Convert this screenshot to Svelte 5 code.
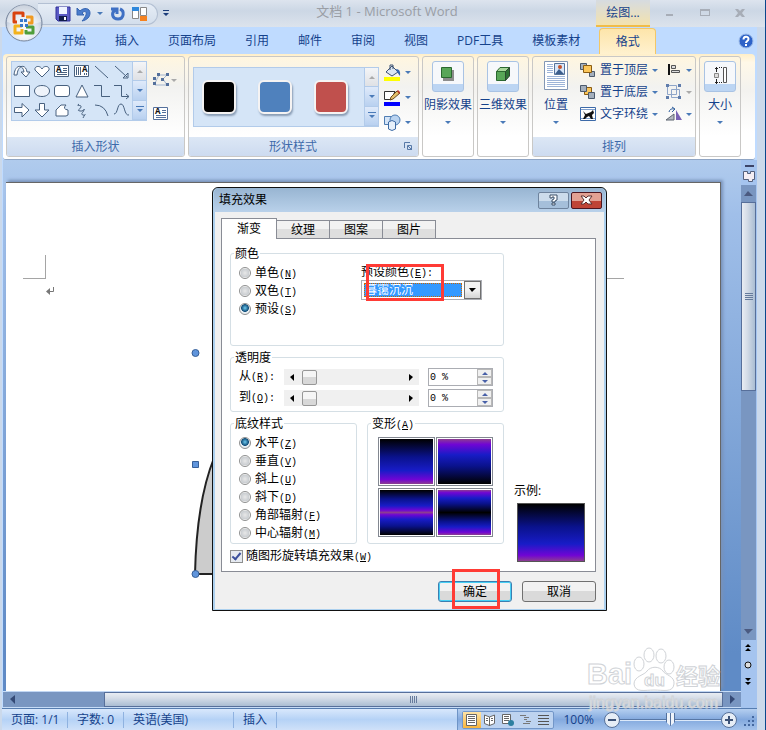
<script lang="ts">
	type Shape = { d: string; fill?: string; letter?: number };

	const shapes: Shape[] = [
		{ d: 'M2 13C3 2 11 2 12 10H9L14 15L18 10H15C14 2 6 2 5 13Z', fill: '#fff' },
		{ d: 'M10 15L3 8C2 4 8 3 10 7C12 3 18 4 17 8Z', fill: '#fff' },
		{ d: 'M2.5 3.5H16.5V14.5H2.5ZM11 6.5H15M11 8.5H15M5 10.5H15M5 12.5H15', fill: '#fff', letter: 4 },
		{ d: 'M2.5 3.5H16.5V14.5H2.5ZM4.5 5V13M6.5 5V13M8.5 5V13M12.5 11V13M14.5 11V13', fill: '#fff', letter: 10 },
		{ d: 'M3 4L16 16' },
		{ d: 'M3 4L15 15M16 11V16H11Z' },
		{ d: 'M2.5 4.5H17.5V15.5H2.5Z', fill: '#fff' },
		{ d: 'M10 4.5C20 4.5 20 15.5 10 15.5C0 15.5 0 4.5 10 4.5Z', fill: '#eef3fa' },
		{ d: 'M5 4.5H15Q17.5 4.5 17.5 7V13Q17.5 15.5 15 15.5H5Q2.5 15.5 2.5 13V7Q2.5 4.5 5 4.5Z', fill: '#fff' },
		{ d: 'M10 4L16 16H4Z', fill: '#fff' },
		{ d: 'M2 4.5H9.5V15.5H18' },
		{ d: 'M2 4.5H9.5V15.5H17M14 13L17 15.5L14 18' },
		{ d: 'M2.5 7.5H10V3.5L17 10L10 17V12.5H2.5Z', fill: '#fff' },
		{ d: 'M7.5 3.5H12.5V10H17L10 17L3 10H7.5Z', fill: '#fff' },
		{ d: 'M4 16V10L9 5H14Q10 9 16 10V15L14 16Z', fill: '#fff' },
		{ d: 'M7 4C3 7 10 4 9 7S4 10 8 11S13 7 12 10S8 14 11 15S14 12 11 18' },
		{ d: 'M3 5Q13 5 16 16' },
		{ d: 'M2 14C6 14 5 4 9 4S12 16 17 15' }
	];

	const ribbonTabs = ['开始', '插入', '页面布局', '引用', '邮件', '审阅', '视图', 'PDF工具', '模板素材'];
	const swatches = ['black', 'blue', 'red'];
	const dialogTabs = ['渐变', '纹理', '图案', '图片'];
	const modes = [
		{ name: '单色', key: 'N' },
		{ name: '双色', key: 'T' },
		{ name: '预设', key: 'S' }
	];
	const shading = [
		{ name: '水平', key: 'Z' },
		{ name: '垂直', key: 'V' },
		{ name: '斜上', key: 'U' },
		{ name: '斜下', key: 'D' },
		{ name: '角部辐射', key: 'F' },
		{ name: '中心辐射', key: 'M' }
	];

	let activeTab = $state('渐变');
	let mode = $state('预设');
	let style = $state('水平');
	let variant = $state('down');
	let zoom = $state(50);
	let rotate = $state(true);
	let sliders = $state([
		{ id: 'from', name: '从', key: 'R', value: 0, text: '0 %' },
		{ id: 'to', name: '到', key: 'O', value: 0, text: '0 %' }
	]);
</script>

{#snippet key(k: string, end = '')}<span class="key">(<u>{k}</u>){end}</span>{/snippet}

{#snippet arrow(dim = false)}
	<svg class="arrow" class:dim width="6" height="3" viewBox="0 0 6 3"><path d="M0 0H6L3 3Z" /></svg>
{/snippet}

{#snippet galleryScroll()}
	<div class="gallery-scroll">
		<button class="off" aria-label="上一行"><svg width="6" height="3"><path d="M0 3H6L3 0Z" /></svg></button>
		<button aria-label="下一行">{@render arrow()}</button>
		<button aria-label="更多"><svg width="8" height="7"><path d="M0 0H8V1H0ZM1 3H7L4 6Z" /></svg></button>
	</div>
{/snippet}

<div class="app">
	<header class="titlebar">
		<div class="quick">
			<button aria-label="保存">
				<svg width="16" height="16"><path d="M1 1H15V15H3L1 13Z" fill="#5a5ac4" stroke="#30309a" /><path d="M4 1H12V8H4Z" fill="#eef3ff" /><path d="M4 10H12V15H4Z" fill="#111c4c" /><path d="M9 11H11V14H9Z" fill="#fff" /></svg>
			</button>
			<button aria-label="撤消">
				<svg width="16" height="16"><path d="M1 2V9H8L6 7C9 4 11 6 10 9C9 11 8 13 6 15C11 14 14 11 14 7C14 2 8 1 4 5Z" fill="#4a7ccc" stroke="#3564b0" /></svg>
			</button>
			{@render arrow()}
			<button class="redo" aria-label="重复">
				<svg width="16" height="16"><path d="M10 3C15 5 14 13 8 13C2 13 1 7 5 4M1 3H7V8" fill="none" stroke="#3f70c4" stroke-width="3" /></svg>
			</button>
			<button aria-label="切换窗口">
				<svg width="18" height="16"><path d="M1.500 1.500H7.500V12.500H1.500Z" fill="#fff" stroke="#888" /><path d="M1 1H8V5H1Z" fill="#2f88dc" /><path d="M9.500 1.500H15.500V9.500H9.500Z" fill="#fff" stroke="#888" /><path d="M9 10H16V15H9Z" fill="#f58220" /></svg>
			</button>
		</div>
		<button class="customize" aria-label="自定义快速访问工具栏">
			<svg width="8" height="8"><path d="M1 0H7V1H1ZM1 3H7L4 6Z" fill="#1b3c7a" /></svg>
		</button>
		<h1>文档 1 - Microsoft Word</h1>
		<div class="context">绘图...</div>
		<div class="window-buttons">
			<button aria-label="最小化"><svg width="10" height="10"><path d="M1 6H8V8H1Z" /></svg></button>
			<button aria-label="还原"><svg width="10" height="10"><path d="M0 1H10V8H0ZM1 3V7H9V3Z" fill-rule="evenodd" /></svg></button>
			<button aria-label="关闭"><svg width="10" height="10"><path d="M0 1H3L5 3L7 1H10L7 5L10 9H7L5 7L3 9H0L3 5Z" /></svg></button>
		</div>
		<button class="office" aria-label="Office 按钮">
			<svg width="38" height="38" viewBox="0 0 38 38">
				<defs>
					<radialGradient id="orb" cx="50%" cy="75%" r="70%"><stop offset="0" stop-color="#fff" /><stop offset="0.6" stop-color="#dce3ed" /><stop offset="1" stop-color="#a6b3c7" /></radialGradient>
				</defs>
				<circle cx="19" cy="19" r="18" fill="url(#orb)" stroke="#75849c" />
				<path d="M2 18A17 17 0 0 1 36 18Q19 24 2 18Z" fill="#fff" opacity="0.45" />
				<g fill="none" stroke-width="3" stroke-linejoin="round">
					<path d="M12 18H9V9H18V13" stroke="#d9430f" />
					<path d="M21 13H27V19H23" stroke="#f09a22" />
					<path d="M17 22H10V29H17V25" stroke="#f3b21d" />
					<path d="M21 23H28V29H21V26" stroke="#4f9e3a" />
				</g>
				<path d="M15 15H18V18H15ZM19 15H22V18H19ZM15 20H18V23H15ZM20 20H23V23H20Z" fill="#3678c9" />
			</svg>
		</button>
	</header>

	<div class="frame">
		<nav class="tabs">
			{#each ribbonTabs as tab}
				<button>{tab}</button>
			{/each}
			<button class="active">格式</button>
			<button class="help" aria-label="帮助">
				<svg width="16" height="16"><circle cx="8" cy="8" r="7" fill="#2d62c8" stroke="#9dbbe8" /><path d="M5.500 6.500C5.500 3 10.500 3 10.500 6C10.500 8 8 8 8 10M8 11V13" fill="none" stroke="#fff" stroke-width="2" /></svg>
			</button>
		</nav>

		<div class="ribbon">
			<section class="group insert">
				<div class="group-body">
					<div class="gallery">
						<div class="shapes">
							{#each shapes as shape}
								<button aria-label="形状">
									<svg width="20" height="20" viewBox="0 0 20 20">
										<path d={shape.d} fill={shape.fill ?? 'none'} stroke="#48617f" />
										{#if shape.letter}
											<rect x={shape.letter - 1} y="4" width="7" height="6" fill="#fff" />
											<text x={shape.letter} y="10">A</text>
										{/if}
									</svg>
								</button>
							{/each}
						</div>
						{@render galleryScroll()}
					</div>
					<div class="insert-tools">
						<button aria-label="编辑形状">
							<svg width="17" height="16"><path d="M2 11L6 3H14L10 7L14 13H2Z" fill="none" stroke="#a3b5cf" /><path d="M0 10H3V13H0ZM4 1H7V4H4ZM13 1H16V4H13ZM8 6H11V9H8ZM13 11H16V14H13ZM0 5H3V8H0Z" fill="#54709c" /></svg>
							{@render arrow(true)}
						</button>
						<button aria-label="文本框">
							<svg width="16" height="18"><path d="M.5 3.500H14.500V15.500H.5ZM9 6.500H13M9 8.500H13M3 11.500H13M3 13.500H13" fill="#fff" stroke="#54709c" /><text x="2" y="10">A</text></svg>
						</button>
					</div>
				</div>
				<h2>插入形状</h2>
			</section>

			<section class="group styles">
				<div class="group-body">
					<div class="gallery">
						<div class="swatches">
							{#each swatches as color}
								<button class="swatch {color}" aria-label={color}></button>
							{/each}
						</div>
						{@render galleryScroll()}
					</div>
					<div class="style-tools">
						<button aria-label="形状填充">
							<svg width="18" height="17"><path d="M2 8L8 2L14 8L8 12Z" fill="#dce6f2" stroke="#3d5275" /><path d="M6 6V1H9V5" fill="none" stroke="#3d5275" /><path d="M12 5Q17 5 16 12L13 8Z" fill="#3566b0" /><path d="M0 13H16V17H0Z" fill="#ff0" /></svg>
							{@render arrow()}
						</button>
						<button aria-label="形状轮廓">
							<svg width="18" height="17"><path d="M.5 2.500H11L7 10.500H.5Z" fill="#fff" stroke="#333" /><path d="M6 11L7 8L13 2L16 4L9 10Z" fill="#e3c06a" stroke="#6c4a1c" /><path d="M13 2L14 1L16 3L15 5Z" fill="#c0392b" /><path d="M0 13H16V17H0Z" fill="#00f" /></svg>
							{@render arrow()}
						</button>
						<button aria-label="更改形状">
							<svg width="18" height="17"><path d="M.5 2.500H10V10.500H.5Z" fill="#d4e4f7" stroke="#4f7db3" /><circle cx="11" cy="6" r="5" fill="#b9d3f0" stroke="#4f7db3" /><path d="M4.500 8Q8 5 11.500 8V15Q8 18 4.500 15Z" fill="#e6f0fb" stroke="#3d6ba5" /></svg>
							{@render arrow()}
						</button>
					</div>
				</div>
				<h2>
					形状样式
					<button class="launcher" aria-label="更多选项"><svg width="9" height="9"><path d="M.5 6V.5H6M3.500 3.500H7.500V7.500H3.500ZM4 4L8 8" fill="none" stroke="#5779a8" /></svg></button>
				</h2>
			</section>

			<section class="group big">
				<button>
					<span class="tile"><svg width="16" height="16"><path d="M3 3H14V14H3Z" fill="#8c8c8c" /><path d="M1.500 .5H11.500V10.500H1.500Z" fill="#58a658" stroke="#2b6830" /></svg></span>
					阴影效果
					{@render arrow()}
				</button>
			</section>
			<section class="group big">
				<button>
					<span class="tile"><svg width="16" height="16"><path d="M1.500 4.500H10.500V13.500H1.500Z" fill="#58a658" stroke="#2b6830" /><path d="M1.500 4.500L5 .5H14.500L10.500 4.500Z" fill="#a6d699" stroke="#2b6830" /><path d="M10.500 4.500L14.500 .5V9L10.500 13.500Z" fill="#2d7034" stroke="#2b4830" /></svg></span>
					三维效果
					{@render arrow()}
				</button>
			</section>

			<section class="group arrange">
				<div class="group-body">
					<button class="position">
						<svg width="24" height="30"><path d="M.5 .5H23.500V28.500H.5Z" fill="#fff" stroke="#8296b4" /><path d="M3 3.500H9M3 5.500H9M3 7.500H9M3 9.500H9M3 11.500H9M3 15.500H21M3 17.500H21M3 19.500H21M3 21.500H21M3 23.500H21M3 25.500H21" stroke="#9db4d8" /><path d="M10.500 2.500H20.500V13.500H10.500Z" fill="#d7e6f9" stroke="#577398" /><path d="M11 13L15 8L20 13Z" fill="#3b5d8c" /><circle cx="16" cy="6" r="2" fill="#c5532c" /></svg>
						<span>位置</span>
						{@render arrow()}
					</button>
					<div class="order">
						<button>
							<svg width="16" height="16"><path d="M.5 1.500H6.500V7.500H.5ZM9.500 9.500H14.500V14.500H9.500Z" fill="#a4afbc" stroke="#4c5a6c" /><path d="M3.500 3.500H11.500V10.500H3.500Z" fill="#fbc65a" stroke="#8a5c12" /></svg>
							置于顶层 {@render arrow()}
						</button>
						<button>
							<svg width="16" height="16"><path d="M4.500 3.500H11.500V10.500H4.500Z" fill="#fbc65a" stroke="#8a5c12" /><path d="M.5 1.500H6.500V7.500H.5ZM8.500 8.500H14.500V14.500H8.500Z" fill="#a4afbc" stroke="#4c5a6c" /></svg>
							置于底层 {@render arrow()}
						</button>
						<button>
							<svg width="16" height="16"><path d="M.5 1.500H15.500V14.500H.5Z" fill="#fff" stroke="#3d6aa8" /><path d="M1 3.500H15M1 12.500H15" stroke="#7e9fce" /><path d="M3 5L6 8L11 6L13 4L14 7L12 9L13 13H11L9 10L7 11L5 13H3L5 9Z" fill="#111" /></svg>
							文字环绕 {@render arrow()}
						</button>
					</div>
					<div class="order">
						<button aria-label="对齐">
							<svg width="16" height="16"><path d="M2 2H4V13H2Z" fill="#111" /><path d="M5.500 3.500H9.500V6.500H5.500ZM5.500 8.500H13.500V10.500H5.500Z" fill="#ddd" stroke="#555" /></svg>
							{@render arrow()}
						</button>
						<button aria-label="组合">
							<svg width="16" height="16"><path d="M1.500 1.500H10.500V10.500H1.500ZM5.500 5.500H13.500V13.500H5.500Z" fill="none" stroke="#8ea5c9" /><path d="M0 0H3V3H0ZM12 0H15V3H12ZM0 12H3V15H0ZM12 12H15V15H12Z" fill="#5f7cab" /></svg>
							{@render arrow(true)}
						</button>
						<button aria-label="旋转">
							<svg width="16" height="16"><path d="M0 14L8 8V14Z" fill="#b5bac2" stroke="#5d6570" /><path d="M10 4V14H16Z" fill="#7a63b5" /><path d="M3 6Q4 2 8 3M6 1L9 3L6 6" fill="none" stroke="#2d5d9c" /></svg>
							{@render arrow()}
						</button>
					</div>
				</div>
				<h2>排列</h2>
			</section>

			<section class="group big">
				<button>
					<span class="tile"><svg width="16" height="18"><path d="M4 0H5V1H6V2H5V5H4V2H3V1H4ZM4 12H5V15H6V16H5V17H4V16H3V15H4Z" fill="#222" /><path d="M2.500 6.500H6.500V10.500H2.500Z" fill="#ddd" stroke="#888" /><path d="M11.500 .5H14.500V15.500H11.500Z" fill="#fff" stroke="#555" /><path d="M7 .5H11M7 15.500H11" stroke="#222" stroke-dasharray="1 1" /></svg></span>
					大小
					{@render arrow()}
				</button>
			</section>
		</div>

		<div class="workspace">
			<div class="document">
				<div class="canvas">
					<div class="paper">
						<svg class="drawing" width="640" height="420" viewBox="0 0 640 420">
							<path d="M17 95.500H40M39.500 72V95M590 95.500H618" stroke="#a5a5a5" fill="none" />
							<path d="M47.500 104V108.500H42" fill="none" stroke="#777" />
							<path d="M44 105V112L40 108.500Z" fill="#777" />
							<path d="M189 391C190 345 196 305 208 275H240V391Z" fill="#ccc" stroke="#222" stroke-width="2" />
							<g fill="#6095dc" stroke="#365f98">
								<circle cx="189.500" cy="170" r="3.500" />
								<path d="M186.500 278.500H192.500V284.500H186.500Z" />
								<circle cx="189.500" cy="391" r="3.500" />
							</g>
						</svg>
					</div>
				</div>
				<div class="hscroll">
					<button aria-label="向左"><svg width="5" height="9"><path d="M5 0V9L0 4Z" /></svg></button>
					<div class="hthumb"><i></i></div>
					<button aria-label="向右"><svg width="5" height="9"><path d="M0 0V9L5 4Z" /></svg></button>
				</div>
			</div>
			<div class="vscroll">
				<button class="ruler" aria-label="标尺">
					<svg width="14" height="20"><path d="M3 1H12V3H3Z" fill="#3c4468" /><path d="M1.500 7.500H5.500V9.500H8.500V7.500H12.500V15.500H10.500V17.500H6.500V15.500H1.500Z" fill="#f4eef4" stroke="#54607c" /></svg>
				</button>
				<div class="vtrack">
					<button aria-label="向上"><svg width="9" height="5"><path d="M0 5H9L4 0Z" /></svg></button>
					<div class="vthumb"><i></i></div>
					<button class="last" aria-label="向下"><svg width="9" height="5"><path d="M0 0H9L4 5Z" /></svg></button>
				</div>
				<div class="browse">
					<button aria-label="前一页"><svg width="6" height="8"><path d="M0 3L3 0L6 3ZM0 7L3 4L6 7Z" /></svg></button>
					<button aria-label="选择浏览对象"><svg width="8" height="8"><circle cx="4" cy="4" r="3" fill="#ddd" stroke="#111" /></svg></button>
					<button aria-label="下一页"><svg width="6" height="8"><path d="M0 0H6L3 3ZM0 4H6L3 7Z" /></svg></button>
				</div>
			</div>
		</div>

		<footer class="status">
			<span class="pages">页面: 1/1</span>
			<span class="words">字数: 0</span>
			<span class="language">英语(美国)</span>
			<span class="insert-mode">插入</span>
			<div class="status-right">
				<div class="views">
					<button class="on" aria-label="页面视图"><svg width="12" height="12"><path d="M.5 .5H10.500V11.500H.5ZM2 2.500H9M2 4.500H9M2 6.500H9M2 8.500H9" fill="#fff" stroke="#666" /></svg></button>
					<button aria-label="阅读版式"><svg width="12" height="12"><path d="M.5 1L5.500 3L10.500 1V9.500L5.500 11.500L.5 9.500ZM5.500 3V12M2 4.500H4M2 6.500H4M7 4.500H9M7 6.500H9" fill="#fff" stroke="#666" /></svg></button>
					<button aria-label="Web 版式"><svg width="12" height="12"><path d="M.5 .5H8.500V9.500H.5ZM2 2.500H7M2 4.500H7M2 6.500H7" fill="#fff" stroke="#666" /><circle cx="9" cy="9" r="3" fill="#2d7fa0" /></svg></button>
					<button aria-label="大纲视图"><svg width="12" height="12"><path d="M0 1.500H6M4 3.500H9M4 5.500H7M6 7.500H11M3 9.500H10" stroke="#777" /></svg></button>
					<button aria-label="普通视图"><svg width="12" height="12"><path d="M0 1.500H11M0 4.500H11M0 7.500H11M0 10.500H11" stroke="#555" /></svg></button>
				</div>
				<span class="percent">100%</span>
				<button class="round" aria-label="缩小"><svg width="8" height="8"><path d="M0 3H8V5H0Z" /></svg></button>
				<input class="zoom" type="range" aria-label="显示比例" bind:value={zoom} />
				<button class="round" aria-label="放大"><svg width="8" height="8"><path d="M3 0H5V3H8V5H5V8H3V5H0V3H3Z" /></svg></button>
				<svg class="grip" width="12" height="12"><path d="M8 0H10V2H8ZM4 4H6V6H4ZM8 4H10V6H8ZM0 8H2V10H0ZM4 8H6V10H4ZM8 8H10V10H8Z" /></svg>
			</div>
		</footer>
	</div>

	<svg class="watermark" width="140" height="72" viewBox="0 0 140 72">
		<g fill="#fff" fill-opacity="0.7" stroke="#d0d3d7">
			<text class="brand" x="0" y="42">Bai</text>
			<path d="M47 42C47 34 58 33 60 29C64 24 72 24 76 29C78 33 88 34 87 42C86 51 76 48 67 48S48 51 47 42Z" />
			<ellipse cx="52" cy="22" rx="5" ry="7" />
			<ellipse cx="62" cy="13" rx="5" ry="7" />
			<ellipse cx="74" cy="14" rx="5" ry="7" />
			<ellipse cx="82" cy="25" rx="5" ry="7" />
			<text class="du" x="57" y="44">du</text>
			<text class="brand-cn" x="89" y="42">经验</text>
			<text class="url" x="2" y="66">jingyan.baidu.com</text>
		</g>
	</svg>

	<div class="dialog" role="dialog" aria-label="填充效果">
		<div class="dialog-title">
			<span>填充效果</span>
			<button aria-label="帮助"><svg width="11" height="12"><path d="M2 4V1H9V6L7 7V8H4V6L6 5V3H4V4ZM4 9H7V11H4Z" fill="#fff" stroke="#3a4e66" /></svg></button>
			<button class="close" aria-label="关闭"><svg width="13" height="11"><path d="M1 1H4L6 3L8 1H12L9 5L12 9H8L6 7L4 9H1L4 5Z" fill="#fff" stroke="#5a3030" /></svg></button>
		</div>
		<div class="dialog-body">
			<div class="dialog-tabs">
				{#each dialogTabs as tab}
					<button class:active={tab === activeTab} onclick={() => (activeTab = tab)}>{tab}</button>
				{/each}
			</div>
			<div class="panel">
				<div class="settings">
					<fieldset class="colors">
						<legend>颜色</legend>
						<div class="radios">
							{#each modes as m}
								<label><input type="radio" name="mode" value={m.name} bind:group={mode} /><span>{m.name}{@render key(m.key)}</span></label>
							{/each}
						</div>
						<div class="preset">
							<label for="preset">预设颜色{@render key('E', ':')}</label>
							<div class="combo">
								<select id="preset"><option>暮霭沉沉</option></select>
								<span class="combo-arrow"><svg width="7" height="4"><path d="M0 0H7L3 4Z" /></svg></span>
							</div>
						</div>
					</fieldset>

					<fieldset class="transparency">
						<legend>透明度</legend>
						{#each sliders as s}
							<div class="slider-row">
								<label for={s.id}>{s.name}{@render key(s.key, ':')}</label>
								<div class="slider">
									<svg width="4" height="7"><path d="M4 0V7L0 3Z" /></svg>
									<input id={s.id} type="range" bind:value={s.value} />
									<svg width="4" height="7"><path d="M0 0V7L4 3Z" /></svg>
								</div>
								<div class="spinner">
									<input type="text" aria-label={s.name} bind:value={s.text} />
									<div class="spin">
										<button aria-label="增加"><svg width="6" height="3"><path d="M0 3H6L3 0Z" /></svg></button>
										<button aria-label="减少"><svg width="6" height="3"><path d="M0 0H6L3 3Z" /></svg></button>
									</div>
								</div>
							</div>
						{/each}
					</fieldset>

					<div class="pair">
						<fieldset class="shading">
							<legend>底纹样式</legend>
							<div class="radios">
								{#each shading as s}
									<label><input type="radio" name="style" value={s.name} bind:group={style} /><span>{s.name}{@render key(s.key)}</span></label>
								{/each}
							</div>
						</fieldset>
						<fieldset class="variants">
							<legend>变形{@render key('A')}</legend>
							<div class="variant-grid">
								{#each ['down', 'up', 'middle', 'edges'] as v}
									<button aria-label={v} onclick={() => (variant = v)}><span class={v}></span></button>
								{/each}
							</div>
						</fieldset>
					</div>

					<label class="rotate"><input type="checkbox" bind:checked={rotate} /><span>随图形旋转填充效果{@render key('W')}</span></label>
				</div>
				<div class="sample">
					<span>示例:</span>
					<div class="sample-box {variant}"></div>
				</div>
			</div>
			<div class="actions">
				<button class="ok">确定</button>
				<button>取消</button>
			</div>
		</div>
		<div class="mark mark-preset"></div>
		<div class="mark mark-ok"></div>
	</div>
</div>

<style>
	:global(body) {
		margin: 0;
	}

	.app {
		position: relative;
		display: flex;
		flex-direction: column;
		min-height: 100vh;
		box-sizing: border-box;
		border-right: 1px solid #0b478c;
		background: #cbd9eb;
		font-family: "Open Sans", "Noto Sans CJK SC", sans-serif;
		font-size: 12px;
		line-height: 16px;
		color: #15428b;
	}

	.app :global(svg) {
		display: block;
		flex: none;
	}

	button {
		display: flex;
		align-items: center;
		justify-content: center;
		padding: 0;
		border: 0;
		background: none;
		font: inherit;
		color: inherit;
		white-space: nowrap;
	}

	h1,
	h2 {
		margin: 0;
		font-size: 12px;
		font-weight: 400;
	}

	text {
		font-size: 8px;
		font-weight: 700;
		fill: #111;
	}

	.arrow {
		fill: #4a7ab8;
	}

	.arrow.dim {
		fill: #aaa;
	}

	/* title bar */
	.titlebar {
		position: relative;
		display: flex;
		align-items: center;
		height: 27px;
		background: linear-gradient(#dde4ee, #ccd7e5 40%, #dce3ec);
	}

	.quick {
		display: flex;
		align-items: center;
		gap: 5px;
		height: 20px;
		margin-left: 38px;
		padding: 0 8px 0 17px;
		border: 1px solid #b3c0d3;
		border-left: 0;
		border-radius: 0 12px 12px 0;
		background: linear-gradient(#e6edf6, #d3deec);
	}

	.quick .redo {
		margin-left: 2px;
	}

	.customize {
		margin-left: 4px;
	}

	.titlebar h1 {
		flex: 1;
		margin-bottom: 6px;
		padding-left: 8px;
		font-size: 13px;
		text-align: center;
		color: #9a9ea5;
	}

	.context {
		width: 54px;
		height: 25px;
		border-bottom: 2px solid #f0bc48;
		background: linear-gradient(#d6dbe0, #f3e2ae);
		line-height: 26px;
		text-align: center;
	}

	.window-buttons {
		display: flex;
		gap: 25px;
		margin: 0 20px 2px 15px;
	}

	.window-buttons svg {
		fill: #a7adb7;
	}

	.office {
		position: absolute;
		left: 5px;
		top: 4px;
		z-index: 2;
	}

	.frame {
		display: flex;
		flex: 1;
		flex-direction: column;
		margin: 0 8px 0 2px;
		background: #bfdbff;
	}

	.tabs {
		display: flex;
		align-items: center;
		gap: 29px;
		height: 27px;
		padding-left: 60px;
	}

	.tabs .active {
		align-self: stretch;
		width: 57px;
		margin: 1px 0 0 -10px;
		border: 1px solid #f3c766;
		border-bottom: 0;
		border-radius: 4px 4px 0 0;
		background: linear-gradient(#fde5aa, #fff1cf);
	}

	.tabs .help {
		margin: 0 3px 0 auto;
	}

	/* ribbon */
	.ribbon {
		display: flex;
		gap: 3px;
		height: 101px;
		margin: 0 2px 0 1px;
		padding: 2px 3px;
		border-bottom: 1px solid #8fa5c4;
		border-radius: 4px 4px 3px 3px;
		background: linear-gradient(#ffefc9, #fff8e8 8%, #f3f2ef 35%, #fff 75%);
	}

	.group {
		display: flex;
		flex-direction: column;
		box-sizing: border-box;
		overflow: hidden;
		border: 1px solid #c9c8c6;
		border-radius: 3px;
		background: linear-gradient(#fff6e0, #f2f2f0 30%, #fff 80%);
	}

	.group h2 {
		display: flex;
		align-items: center;
		justify-content: center;
		height: 19px;
		background: linear-gradient(#dce7f5, #cddbf0);
		color: #3e6aaa;
	}

	.group-body {
		display: flex;
		align-items: center;
		flex: 1;
	}

	.insert {
		width: 179px;
	}

	.styles {
		width: 231px;
	}

	.arrange {
		width: 164px;
	}

	.big {
		width: 52px;
	}

	.big:last-child {
		width: 42px;
	}

	.gallery {
		display: flex;
		height: 58px;
		margin-left: 4px;
		border: 1px solid #b2cbea;
		background: #d5e5f7;
	}

	.insert .gallery {
		margin-bottom: 12px;
	}

	.shapes {
		display: grid;
		grid-template-columns: repeat(6, 20px);
		grid-auto-rows: 19px;
	}

	.gallery-scroll {
		display: flex;
		flex-direction: column;
		width: 14px;
	}

	.gallery-scroll button {
		flex: 1;
		border: 1px solid #b2cbea;
		border-width: 0 0 1px 1px;
		background: linear-gradient(#dfeafa, #b9d1f0);
	}

	.gallery-scroll .off {
		background: linear-gradient(#f4f5f7, #dfe1e5);
	}

	.gallery-scroll svg {
		fill: #4a7ab8;
	}

	.gallery-scroll .off svg {
		fill: #aaa;
	}

	.insert-tools {
		display: flex;
		flex-direction: column;
		align-items: flex-start;
		gap: 16px;
		margin: 0 0 0 6px;
	}

	.insert-tools button {
		gap: 1px;
	}

	.swatches {
		display: flex;
		align-items: center;
		gap: 22px;
		width: 162px;
		padding-left: 8px;
	}

	.swatch {
		width: 34px;
		height: 34px;
		border: 2px solid #f5f3f3;
		border-radius: 6px;
		box-shadow: 1px 2px 2px #8a9db5;
	}

	.swatch.black {
		background: #000;
	}

	.swatch.blue {
		background: #4f81bd;
	}

	.swatch.red {
		background: #c0504d;
	}

	.style-tools {
		display: flex;
		flex-direction: column;
		gap: 8px;
		margin-left: 5px;
	}

	.style-tools button {
		gap: 3px;
	}

	.styles h2 {
		justify-content: flex-end;
		gap: 87px;
		padding-right: 5px;
	}

	.big button,
	.position {
		flex-direction: column;
		width: 100%;
		padding-top: 4px;
	}

	.big .arrow,
	.position .arrow {
		margin-top: 8px;
	}

	.tile {
		display: flex;
		align-items: flex-start;
		justify-content: center;
		width: 30px;
		height: 24px;
		margin-bottom: 5px;
		padding-top: 5px;
		border: 1px solid #a9c3e4;
		border-radius: 3px;
		background: linear-gradient(#f6f8fb 75%, #bcd5f3 75%);
	}

	.arrange .position {
		align-self: flex-start;
		width: 24px;
		margin: 0 12px 0 11px;
	}

	.position span {
		margin-top: 6px;
	}

	.order {
		display: flex;
		flex-direction: column;
		gap: 6px;
		margin: 0 8px 10px 0;
	}

	.order button {
		gap: 4px;
		height: 16px;
	}

	/* document area */
	.workspace {
		display: flex;
		flex: 1;
		margin-left: 1px;
		background: linear-gradient(#b0cbed, #a0bfe9 10%, #5f8bc6 90%);
	}

	.document {
		display: flex;
		flex: 1;
		flex-direction: column;
	}

	.canvas {
		display: flex;
		flex: 1;
		padding: 22px 20px 0 3px;
	}

	.paper {
		position: relative;
		flex: 1;
		border: 1px solid #666;
		border-width: 1px 1px 0 0;
		background: #fff;
		box-shadow: 2px -2px 3px #7891b8;
		overflow: hidden;
	}

	.drawing {
		position: absolute;
		left: 0;
		top: 0;
	}

	.hscroll {
		display: flex;
		height: 15px;
		border: 1px solid #c6dcf7;
		border-width: 1px 0;
		background: #7996c1;
	}

	.hscroll button {
		width: 18px;
		fill: #354a76;
	}

	.hthumb {
		display: flex;
		flex: 1;
		align-items: center;
		justify-content: center;
		margin-left: 83px;
		border: 1px solid #576f9a;
		background: linear-gradient(#e9edf3, #d4dce7 40%, #aabdd3);
	}

	.hthumb i {
		width: 8px;
		height: 7px;
		background: repeating-linear-gradient(90deg, #667b9c 0 1px, #fff0 1px 2px);
	}

	.vscroll {
		display: flex;
		flex-direction: column;
		width: 16px;
		padding-top: 3px;
		background: #a5c4ef;
	}

	.ruler {
		height: 22px;
	}

	.vtrack {
		display: flex;
		flex: 1;
		flex-direction: column;
		margin-right: 1px;
		background: #7996c1;
	}

	.vtrack button {
		height: 17px;
		fill: #4b5a80;
	}

	.vthumb {
		display: flex;
		flex: 0 0 187px;
		align-items: center;
		justify-content: center;
		border: 1px solid #576f9a;
		background: linear-gradient(90deg, #e9edf3, #d4dce7 40%, #aabdd3);
	}

	.vthumb i {
		width: 8px;
		height: 8px;
		background: repeating-linear-gradient(#667b9c 0 1px, #fff0 1px 2px);
	}

	.vtrack .last {
		margin-top: auto;
	}

	.browse {
		display: flex;
		flex-direction: column;
		align-items: center;
		gap: 9px;
		padding: 4px 3px 22px 0;
	}

	/* status bar */
	.status {
		display: flex;
		align-items: center;
		height: 21px;
		border-top: 1px solid #567db0;
		background: linear-gradient(#d9e8fc, #b5d2f6 50%, #cfe1f9);
	}

	.status > span {
		box-sizing: border-box;
		padding-left: 9px;
		border-right: 1px solid #8fb2e0;
	}

	.pages {
		width: 66px;
	}

	.words {
		width: 56px;
	}

	.language {
		width: 110px;
	}

	.insert-mode {
		width: 43px;
	}

	.status-right {
		display: flex;
		align-items: center;
		align-self: stretch;
		margin-left: auto;
		padding-left: 4px;
		border-left: 1px solid #6e94c7;
		background: linear-gradient(#b5cff0, #83a9de 50%, #a5c3ec);
	}

	.views {
		display: flex;
		border: 1px solid #7296c8;
		border-radius: 2px;
		background: #bdd3f0;
	}

	.views button {
		width: 18px;
		height: 16px;
	}

	.views .on {
		background: linear-gradient(#fde3a8, #f9b63c);
	}

	.percent {
		margin: 0 10px 0 9px;
	}

	.round {
		width: 16px;
		height: 16px;
		border: 1px solid #567099;
		border-radius: 50%;
		background: #e6edf6;
		fill: #3c5277;
	}

	.zoom {
		width: 101px;
		height: 16px;
		margin: 0;
		appearance: none;
		background: linear-gradient(#fff0 7px, #5777a6 7px 8px, #dce9fa 8px 9px, #fff0 9px);
	}

	.zoom::-webkit-slider-thumb {
		width: 9px;
		height: 13px;
		appearance: none;
		background: linear-gradient(90deg, #52709d 1px, #eef3fa 1px 4px, #52709d 4px 5px, #eef3fa 5px 8px, #52709d 8px);
		clip-path: polygon(0 0, 100% 0, 100% 70%, 50% 100%, 0 70%);
	}

	.grip {
		margin: 4px 1px 0 7px;
		fill: #4468a0;
	}

	.watermark {
		position: absolute;
		right: 38px;
		bottom: 16px;
	}

	.watermark text {
		font-family: "Liberation Sans", "Noto Sans CJK SC", sans-serif;
		fill: #fff;
		fill-opacity: 0.7;
	}

	.watermark .brand {
		font-size: 29px;
	}

	.watermark .du {
		font-size: 17px;
	}

	.watermark .brand-cn {
		font-size: 22px;
	}

	.watermark .url {
		font-size: 16px;
		font-weight: 400;
	}

	/* fill effects dialog */
	.dialog {
		position: absolute;
		left: 212px;
		top: 187px;
		width: 391px;
		padding: 0 1px 1px;
		border: 1px solid #111;
		border-radius: 6px 6px 0 0;
		background: #acd0ee;
		line-height: 14px;
		color: #000;
	}

	.dialog-title {
		display: flex;
		align-items: center;
		gap: 2px;
		height: 24px;
		padding: 0 3px 0 5px;
		border-radius: 5px 5px 0 0;
		background: linear-gradient(#98b5d2, #b9d1ea);
	}

	.dialog-title span {
		margin-right: auto;
	}

	.dialog-title button {
		width: 31px;
		height: 17px;
		border: 1px solid #6e839d;
		border-radius: 2px;
		background: linear-gradient(#ccdcec 50%, #a5bfda 50%);
	}

	.dialog-title .close {
		border-color: #4c1620;
		background: linear-gradient(#e2a193 50%, #bf4436 50%);
	}

	.dialog-body {
		margin: 0 1px;
		padding: 6px 8px 7px 6px;
		background: #f0f0f0;
	}

	.dialog-tabs {
		display: flex;
		align-items: flex-end;
	}

	.dialog-tabs button {
		width: 53px;
		height: 18px;
		border: 1px solid #898c95;
		border-width: 1px 1px 0 0;
		background: linear-gradient(#f2f2f2 50%, #dedede 50%);
	}

	.dialog-tabs .active {
		position: relative;
		width: 56px;
		height: 21px;
		margin-bottom: -1px;
		border-left-width: 1px;
		background: #fff;
	}

	.panel {
		display: flex;
		gap: 10px;
		padding: 7px 9px 7px 8px;
		border: 1px solid #898c95;
		background: #fff;
	}

	.settings {
		display: flex;
		flex: none;
		flex-direction: column;
		gap: 4px;
		width: 274px;
	}

	fieldset {
		box-sizing: border-box;
		min-width: 0;
		margin: 0;
		padding: 4px 8px 1px;
		border: 1px solid #d5dfe5;
		border-radius: 3px;
	}

	legend {
		height: 14px;
		margin-left: -5px;
		padding: 0 1px;
		line-height: 16px;
	}

	.key {
		font-family: "Liberation Mono", monospace;
		font-size: 10px;
		line-height: 10px;
	}

	.colors {
		display: flex;
		height: 100px;
	}

	.radios {
		display: flex;
		flex-direction: column;
	}

	.radios label {
		display: flex;
		align-items: center;
		gap: 4px;
		height: 18px;
	}

	input[type='radio'] {
		width: 12px;
		height: 12px;
		margin: 0;
		appearance: none;
		border: 1px solid #8e8f8f;
		border-radius: 50%;
		background: radial-gradient(#e8e8e8, #c8ccd0 60%, #f4f4f4 65%);
	}

	input[type='radio']:checked {
		background: radial-gradient(circle at 50% 40%, #6ecbf0, #12507c 45%, #e8eef2 55%);
	}

	.colors .radios {
		width: 122px;
	}

	.preset label {
		display: block;
		height: 16px;
		line-height: 16px;
	}

	.combo {
		display: flex;
		width: 119px;
		height: 18px;
		border: 1px solid #abadb3;
		background: #fff;
	}

	.combo select {
		flex: 1;
		min-width: 0;
		margin: 2px;
		padding: 0;
		appearance: none;
		border: 1px dotted #cc6600;
		border-radius: 0;
		background: #3399ff;
		font: inherit;
		line-height: 12px;
		color: #fff;
	}

	.combo-arrow {
		display: flex;
		align-items: center;
		justify-content: center;
		width: 15px;
		border: 1px solid #707070;
		background: linear-gradient(#f2f2f2 50%, #d5d5d5);
	}

	.transparency {
		display: flex;
		flex-direction: column;
		gap: 3px;
		height: 62px;
	}

	.slider-row {
		display: flex;
		align-items: center;
		height: 18px;
	}

	.slider-row label {
		width: 45px;
		margin-bottom: 2px;
	}

	.slider {
		display: flex;
		align-items: center;
		gap: 8px;
		width: 123px;
		height: 16px;
		padding: 0 6px;
		background: #f0f0f0;
	}

	.slider input {
		flex: 1;
		min-width: 0;
		height: 16px;
		margin: 0;
		appearance: none;
		background: none;
	}

	.slider input::-webkit-slider-thumb {
		width: 15px;
		height: 15px;
		appearance: none;
		border: 1px solid #979797;
		border-radius: 2px;
		background: linear-gradient(#f5f5f5 50%, #d8d8d8 50%);
	}

	.spinner {
		display: flex;
		width: 63px;
		height: 16px;
		margin-left: 9px;
		border: 1px solid #abadb3;
	}

	.spinner input {
		flex: 1;
		min-width: 0;
		padding: 0 1px;
		border: 0;
		font: 10px "Liberation Mono", monospace;
	}

	.spin {
		display: flex;
		flex-direction: column;
		width: 15px;
	}

	.spin button {
		flex: 1;
		border: 1px solid #b8b8b8;
		background: #f0f0f0;
		fill: #4860a8;
	}

	.pair {
		display: flex;
		gap: 10px;
	}

	.shading {
		width: 127px;
	}

	.variants {
		width: 137px;
	}

	.variant-grid {
		display: grid;
		grid-template-columns: 57px 57px;
		gap: 2px 1px;
		margin: 3px 0 0 2px;
	}

	.variant-grid button {
		height: 49px;
		padding: 1px;
		border: 1px solid #828790;
	}

	.variant-grid span {
		align-self: stretch;
		flex: 1;
	}

	.down {
		background: linear-gradient(#000, #0a128c 40%, #181cc7 70%, #7005d4 90%, #8c3d91);
	}

	.up {
		background: linear-gradient(#8c3d91, #7005d4 12%, #181cc7 35%, #0a128c 60%, #000);
	}

	.middle {
		background: linear-gradient(#000, #0a128c 20%, #181cc7 35%, #7005d4 45%, #8c3d91 50%, #7005d4 55%, #181cc7 65%, #0a128c 80%, #000);
	}

	.edges {
		background: linear-gradient(#8c3d91, #7005d4 6%, #181cc7 18%, #0a128c 30%, #000 50%, #0a128c 70%, #181cc7 82%, #7005d4 94%, #8c3d91);
	}

	.rotate {
		display: flex;
		align-items: center;
		gap: 3px;
		height: 16px;
	}

	.rotate input {
		display: flex;
		align-items: center;
		justify-content: center;
		width: 13px;
		height: 13px;
		margin: 0;
		appearance: none;
		border: 1px solid #8e8f8f;
		background: #e6eaf0;
	}

	.rotate input:checked::after {
		width: 3px;
		height: 7px;
		margin-bottom: 2px;
		border: solid #3b4f9c;
		border-width: 0 2px 2px 0;
		content: '';
		transform: rotate(40deg);
	}

	.sample {
		display: flex;
		flex: 1;
		flex-direction: column;
		justify-content: flex-end;
		gap: 5px;
		margin-bottom: 2px;
	}

	.sample-box {
		width: 66px;
		height: 57px;
		margin-left: 3px;
		border: 1px solid #555;
	}

	.actions {
		display: flex;
		justify-content: flex-end;
		gap: 10px;
		margin-top: 9px;
	}

	.actions button {
		width: 74px;
		height: 21px;
		border: 1px solid #707070;
		border-radius: 3px;
		background: linear-gradient(#f2f2f2 50%, #dadada 50%);
	}

	.actions .ok {
		border-color: #3c7fb1;
		box-shadow: inset 0 0 0 1px #46d0f5;
	}

	.mark {
		position: absolute;
		box-sizing: border-box;
		border: 3px solid #ff3b35;
		pointer-events: none;
	}

	.mark-preset {
		left: 153px;
		top: 76px;
		width: 78px;
		height: 37px;
	}

	.mark-ok {
		left: 239px;
		top: 381px;
		width: 48px;
		height: 40px;
	}
</style>
